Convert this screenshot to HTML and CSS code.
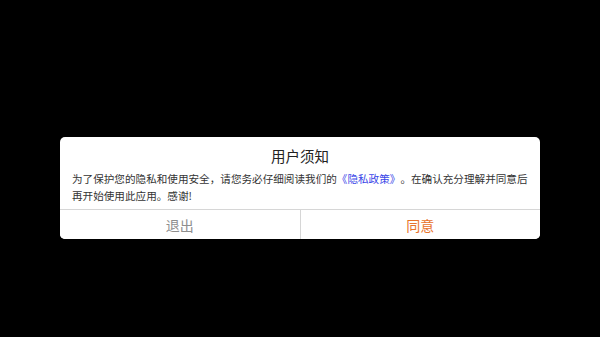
FILE: index.html
```html
<!DOCTYPE html>
<html lang="zh-CN">
<head>
    <meta charset="UTF-8">
    <meta name="viewport" content="width=device-width, initial-scale=1.0">
    <title>用户须知</title>
    <link rel="stylesheet" href="styles.css">
</head>
<body>
    <div class="dialog">
        <div class="dialogBody">
            <h1 class="dialogTitle">用户须知</h1>
            <p class="dialogText">为了保护您的隐私和使用安全，请您务必仔细阅读我们的<a href="#" class="policyLink">《隐私政策》</a>。在确认充分理解并同意后再开始使用此应用。感谢!</p>
        </div>
        <div class="buttonRow">
            <button class="btn btnExit">退出</button>
            <button class="btn btnAgree">同意</button>
        </div>
    </div>
</body>
</html>
```

FILE: styles.css
```css
body {
    margin: 0;
    padding: 0;
    background-color: #000;
    font-family: "Noto Sans CJK SC", "Noto Sans", sans-serif;
}

.dialog {
    width: 480px;
    margin: 137px 0 0 60px;
    background-color: #fff;
    border-radius: 5px;
    overflow: hidden;
}

.dialogBody {
    padding: 9px 12px 5px;
}

.dialogTitle {
    margin: 0;
    font-size: 14.5px;
    line-height: 20px;
    font-weight: normal;
    text-align: center;
    color: #222;
}

.dialogText {
    margin: 4px 0 0;
    font-size: 10.6px;
    line-height: 17px;
    color: #333;
    text-spacing-trim: space-all;
}

.policyLink {
    color: #3b48e8;
    text-decoration: none;
}

.buttonRow {
    display: flex;
    border-top: 1px solid #d6d6d6;
}

.btn {
    flex: 1;
    height: 29px;
    padding: 0;
    border: none;
    background-color: #fff;
    font-family: inherit;
    font-size: 14px;
    cursor: pointer;
}

.btnExit {
    color: #8e8e8e;
    border-right: 1px solid #d6d6d6;
}

.btnAgree {
    color: #e8722a;
}
```
